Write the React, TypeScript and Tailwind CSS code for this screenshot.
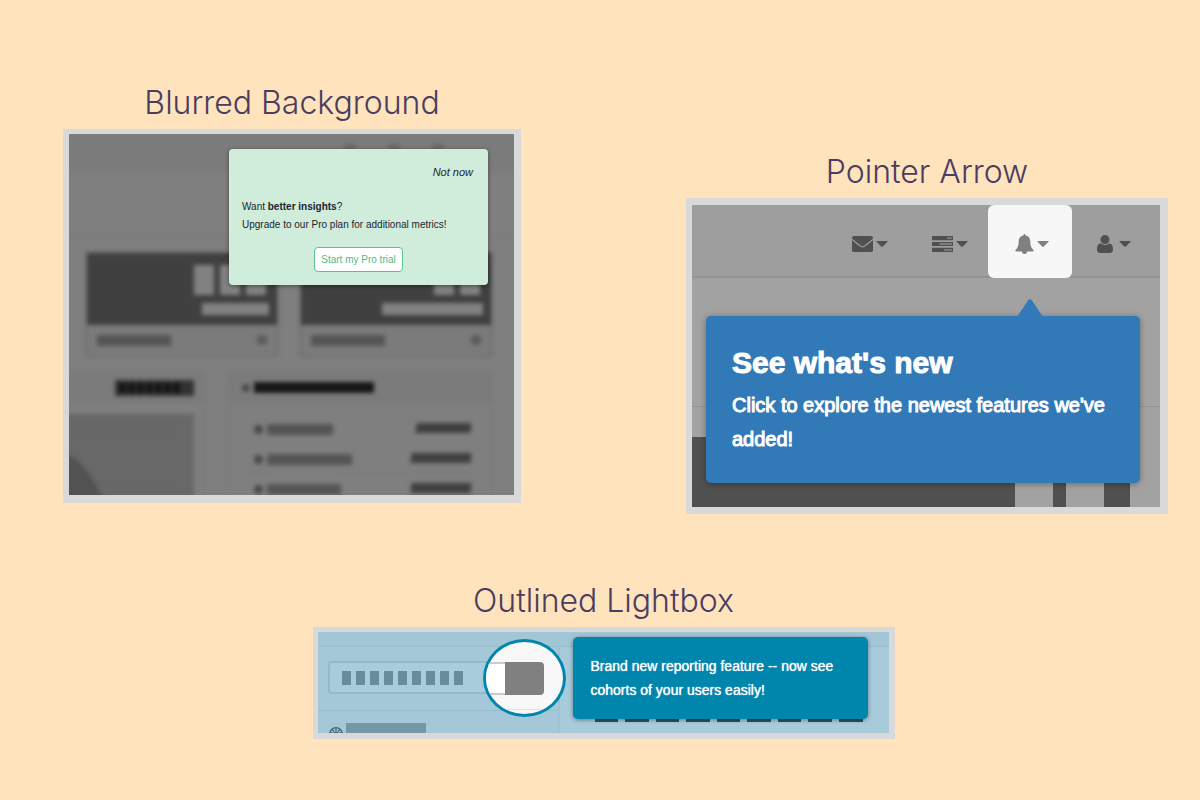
import type { ReactNode } from "react";

type ExampleProps = {
  title: string;
  className?: string;
  frameClassName: string;
  children: ReactNode;
};

function Example({ title, className = "", frameClassName, children }: ExampleProps) {
  return (
    <figure className={`flex min-w-0 flex-col gap-1.5 ${className}`}>
      <figcaption className="text-center font-['Inter',sans-serif] text-[32px] leading-10 font-light whitespace-nowrap text-[#4a3d60]">
        {title}
      </figcaption>
      <div className={`bg-[#d9d9d9] ${frameClassName}`}>{children}</div>
    </figure>
  );
}

function StatCard({ blocks, barClass }: { blocks: number[]; barClass: string }) {
  return (
    <div className="min-w-0 flex-1 border-2 border-[#707070]">
      <div className="flex h-[72px] flex-col items-end gap-2 bg-[#404040] px-2 pt-3">
        <div className="flex gap-1.5 pr-[3px]">
          {blocks.map((n) => (
            <span key={n} className="h-[30px] w-5 bg-[#828282]" />
          ))}
        </div>
        <span className={`h-3 bg-[#828282] ${barClass}`} />
      </div>
      <div className="flex h-[30px] items-center justify-between bg-[#7b7b7b] px-2.5">
        <span className="h-[11px] w-[74px] bg-[#555]" />
        <span className="size-2.5 rounded-sm bg-[#5c5c5c]" />
      </div>
    </div>
  );
}

const listRows = [
  { name: "w-[66px]", value: "w-[55px]" },
  { name: "w-[85px]", value: "w-[60px]" },
  { name: "w-[74px]", value: "w-[60px]" },
];

function BlurredDashboard() {
  return (
    <div aria-hidden="true" className="blur-[2px]">
      <div className="h-9 border-b border-[#747474] bg-[#7b7b7b] pt-2.5 pr-[70px]">
        <div className="flex justify-end gap-8">
          <span className="h-1.5 w-3 bg-[#6a6a6a]" />
          <span className="h-1.5 w-3 bg-[#6a6a6a]" />
          <span className="h-1.5 w-3 bg-[#6a6a6a]" />
        </div>
      </div>
      <div className="h-[67px] border-b border-[#757575]" />
      <div className="flex gap-5 pt-3.5 pr-[21px] pl-4">
        <StatCard blocks={[0, 1, 2]} barClass="w-[67px]" />
        <StatCard blocks={[0, 1]} barClass="w-[101px]" />
      </div>
      <div className="flex gap-6 pt-4 pr-[22px]">
        <div className="flex w-[136px] flex-col gap-3 border-t border-r border-[#757575]">
          <div className="flex h-7 items-center justify-end border-b border-[#757575] bg-[#7b7b7b] pr-2.5">
            <span className="flex h-4 w-[79px] items-center gap-0.5 bg-[#333] pl-1">
              {[0, 1, 2, 3, 4, 5, 6].map((n) => (
                <span key={n} className="h-2.5 w-[7px] bg-[#151515]" />
              ))}
            </span>
          </div>
          <svg className="-ml-2 h-[90px] w-[133px]" viewBox="0 0 133 90">
            <rect width="133" height="90" fill="#686868" />
            <path d="M0 18H114M0 69H114" stroke="#646464" />
            <path d="M0 42C19 38 27 60 47 90H0Z" fill="#525252" />
          </svg>
        </div>
        <div className="min-w-0 flex-1 border border-[#757575]">
          <div className="flex h-7 items-center gap-1 border-b border-[#757575] bg-[#7b7b7b] px-3">
            <span className="size-2 rounded-full bg-[#4a4a4a]" />
            <span className="h-[11px] w-[120px] bg-[#181818]" />
          </div>
          <div className="pt-2.5 pr-4 pl-3">
            {listRows.map((row, i) => (
              <div
                key={i}
                className="flex h-[30px] items-center border-t border-[#797979] px-1"
              >
                <div className="flex flex-1 items-center gap-1 pt-1 pl-2">
                  <span className="size-[9px] rounded-full bg-[#484848]" />
                  <span className={`h-[11px] bg-[#555] ${row.name}`} />
                </div>
                <span className={`h-2.5 -skew-x-6 bg-[#404040] ${row.value}`} />
              </div>
            ))}
          </div>
        </div>
      </div>
    </div>
  );
}

function BlurredExample() {
  return (
    <div className="relative h-[361px] overflow-hidden bg-[#7f7f7f]">
      <BlurredDashboard />
      <div
        role="dialog"
        className="absolute top-[15px] right-[26px] flex h-[136px] w-[259px] flex-col rounded bg-[#d0ecdb] px-[13px] text-[10px] text-[#1d2430] shadow-[0_1px_4px_rgba(0,0,0,0.45)]"
      >
        <div className="flex justify-end pt-3.5 pr-0.5">
          <button type="button" className="text-[11px] leading-[18px] italic">
            Not now
          </button>
        </div>
        <p className="pt-[17px] leading-[18px]">
          Want <strong className="font-bold">better insights</strong>?
          <br />
          Upgrade to our Pro plan for additional metrics!
        </p>
        <button
          type="button"
          className="mt-[13px] h-[25px] w-[89px] self-center rounded border border-[#5dbf92] bg-white text-[#4dba86]"
        >
          Start my Pro trial
        </button>
      </div>
    </div>
  );
}

function Caret() {
  return (
    <svg className="h-1.5 w-3" viewBox="0 0 12 6" fill="currentColor" aria-hidden="true">
      <path d="M1 0h10q1 0 .5 .8L6.8 5.6q-.8.6-1.6 0L.5.8Q0 0 1 0Z" />
    </svg>
  );
}

function MailIcon() {
  return (
    <svg className="h-4 w-[21px]" viewBox="0 0 21 16" aria-hidden="true">
      <rect width="21" height="16" rx="1.8" fill="currentColor" />
      <path d="M0 3.2C1.5 5 6 8 8.2 9.9Q10.5 11.8 12.8 9.9C15 8 19.5 5 21 3.2" fill="none" stroke="#9e9e9e" strokeWidth="1.2" />
    </svg>
  );
}

function TasksIcon() {
  return (
    <svg className="h-4 w-[21px]" viewBox="0 0 21 16" aria-hidden="true">
      <path d="M0 0h21v4.2H0ZM0 5.9h21v4.2H0ZM0 11.8h21V16H0Z" fill="currentColor" />
      <path d="M15 1.6h4.8v1H15ZM7.7 7.5h12.1v1H7.7ZM12 13.4h7.8v1H12Z" fill="#a8a8a8" />
    </svg>
  );
}

function BellIcon() {
  return (
    <svg className="h-5 w-[19px]" viewBox="0 0 19 20" fill="currentColor" aria-hidden="true">
      <path d="M9.500 0Q10.700 0 10.600 1.500C14 2.200 15.300 4.900 15.300 7.600C15.300 12.300 16.600 14.400 18.800 16.200Q18.600 17.400 17.500 17.400H12.200Q12 19.900 9.500 19.900T6.800 17.400H1.500Q.4 17.400.2 16.200C2.400 14.400 3.700 12.300 3.700 7.600C3.700 4.900 5 2.200 8.400 1.500Q8.300 0 9.500 0Z" />
    </svg>
  );
}

function UserIcon() {
  return (
    <svg className="h-[18px] w-4" viewBox="0 0 16 18" fill="currentColor" aria-hidden="true">
      <circle cx="8" cy="4.600" r="4.500" />
      <path d="M3.800 8.200C1 8.400 0 11.400 0 14.600C0 16.800 1.300 18 3.200 18H12.800C14.700 18 16 16.800 16 14.600C16 11.400 15 8.400 12.200 8.200Q10.400 10 8 10T3.800 8.200Z" />
    </svg>
  );
}

function NavButton({ label, children }: { label: string; children: ReactNode }) {
  return (
    <button
      type="button"
      aria-label={label}
      className="flex h-full w-20 items-center justify-center gap-[3px] pt-1.5 pl-1 text-[#505050]"
    >
      {children}
      <Caret />
    </button>
  );
}

function PointerExample() {
  return (
    <div className="relative flex h-[302px] flex-col overflow-hidden bg-[#a2a2a2]">
      <nav className="flex h-[73px] shrink-0 justify-end border-b-2 border-[#929292] bg-[#9e9e9e] pr-2">
        <NavButton label="Messages">
          <MailIcon />
        </NavButton>
        <NavButton label="Tasks">
          <TasksIcon />
        </NavButton>
        <button
          type="button"
          aria-label="Alerts"
          className="flex h-[73px] w-[84px] items-center justify-center gap-[3px] rounded-md bg-[#f7f7f7] pt-1 pl-1 text-[#808080]"
        >
          <BellIcon />
          <Caret />
        </button>
        <NavButton label="Account">
          <UserIcon />
          <span />
        </NavButton>
      </nav>
      <div aria-hidden="true" className="h-[129px] shrink-0 border-b border-[#959595]" />
      <div aria-hidden="true" className="mt-[30px] mr-[30px] flex flex-1 justify-end bg-[#505050] pr-[26px]">
        <span className="mr-[13px] w-[38px] bg-[#a2a2a2]" />
        <span className="w-[38px] bg-[#a2a2a2]" />
      </div>
      <div
        role="dialog"
        className="absolute inset-x-[14px] top-[111px] mr-1.5 h-[167px] rounded-[5px] bg-[#3279b7] px-[26px] pt-7 text-white shadow-[0_1px_6px_rgba(0,0,0,0.35)]"
      >
        <svg className="absolute -top-[17px] right-[97px] h-[18px] w-[26px]" viewBox="0 0 26 18" aria-hidden="true">
          <path d="M0 18L11 1.600Q13-1 15 1.600L26 18Z" fill="#3279b7" />
        </svg>
        <h2 className="text-[30px] leading-[38px] font-bold [-webkit-text-stroke:1px_white]">See what&apos;s new</h2>
        <p className="pt-1.5 text-[20px] leading-[34px] [-webkit-text-stroke:1px_white]">
          Click to explore the newest features we&apos;ve added!
        </p>
      </div>
    </div>
  );
}

function PaletteIcon() {
  return (
    <svg className="size-[14px] shrink-0" viewBox="0 0 14 14" aria-hidden="true">
      <circle cx="7" cy="7" r="6.300" fill="none" stroke="#466a79" strokeWidth="1.300" />
      <path d="M7 .7v4M1 5l3.500 1.500L7 4.700l2.500 1.800L13 5M3 2.200l2 2.300M11 2.200L9 4.500" fill="none" stroke="#466a79" strokeWidth="1.300" />
    </svg>
  );
}

function LightboxExample() {
  return (
    <div className="relative flex h-[101px] flex-col overflow-hidden bg-[#a7cbdb]">
      <div className="h-[15px] shrink-0 border-b border-[#98bccc] bg-[#a3c6d6]" />
      <div className="flex flex-1">
        <div className="w-[242px] border-r-2 border-[#9fc3d3] bg-[#a4c8d8]">
          <div className="h-16 border-b border-[#98bccc] pt-3.5 pl-2.5">
            <div className="relative w-[217px]">
              <input
                type="text"
                aria-label="Search"
                className="block h-[33px] w-full rounded border-2 border-[#95b9c8] bg-[#a7cddd] outline-none"
              />
              <div aria-hidden="true" className="pointer-events-none absolute top-[10px] left-[14px] flex gap-[5px]">
                {[0, 1, 2, 3, 4, 5, 6, 7, 8].map((n) => (
                  <span key={n} className="h-[14px] w-[9px] bg-[#678d9d]" />
                ))}
              </div>
              <div className="absolute -top-[22px] -right-[21px] flex h-[78px] w-[83px] items-center overflow-hidden rounded-[50%] border-[3px] border-[#0086ad] bg-[#f8f8f8]">
                <span className="h-[33px] w-[19px] border-y-2 border-[#ccc] bg-white" />
                <button type="button" aria-label="Run search" className="h-[33px] w-[39px] rounded-r bg-[#808080]" />
                <span className="absolute inset-x-0 top-[67px] h-px bg-[#e2e2e2]" />
              </div>
            </div>
          </div>
          <div aria-hidden="true" className="flex h-[22px] items-start gap-[3px] overflow-hidden pt-3 pl-[11px]">
            <span className="pt-1">
              <PaletteIcon />
            </span>
            <span className="h-3 w-20 bg-[#7298a8]" />
          </div>
        </div>
        <div aria-hidden="true" className="flex flex-1 items-start gap-[7px] pt-[70px] pr-[26px] pl-[35px]">
          {[0, 1, 2, 3, 4, 5, 6, 7, 8].map((n) => (
            <span key={n} className="h-[5px] flex-1 bg-[#2f5261]" />
          ))}
        </div>
      </div>
      <div
        role="dialog"
        className="absolute top-[5px] right-[21px] left-[255px] h-[82px] rounded-[5px] bg-[#0086ad] px-[18px] pt-[17px] shadow-[0_1px_4px_rgba(0,0,0,0.4)]"
      >
        <p className="text-[14px] leading-6 text-white [text-shadow:0_0_1px_white]">
          Brand new reporting feature -- now see
          <br />
          cohorts of your users easily!
        </p>
      </div>
    </div>
  );
}

export default function App() {
  return (
    <main className="min-h-screen bg-[#ffe3bd] pt-[83px] pr-8 pb-[61px] pl-[63px] font-['Liberation_Sans',Arial,sans-serif]">
      <div className="grid grid-cols-[458fr_482fr] items-start gap-[165px]">
        <Example title="Blurred Background" frameClassName="pt-[5px] pr-[7px] pb-2 pl-1.5">
          <BlurredExample />
        </Example>
        <Example title="Pointer Arrow" className="pt-[69px]" frameClassName="pt-[7px] pr-2 pb-[7px] pl-1.5">
          <PointerExample />
        </Example>
      </div>
      <div className="flex justify-center pt-[67px] pr-6">
        <Example title="Outlined Lightbox" className="w-full max-w-[582px]" frameClassName="pt-[5px] pr-1.5 pb-1.5 pl-[5px]">
          <LightboxExample />
        </Example>
      </div>
    </main>
  );
}
